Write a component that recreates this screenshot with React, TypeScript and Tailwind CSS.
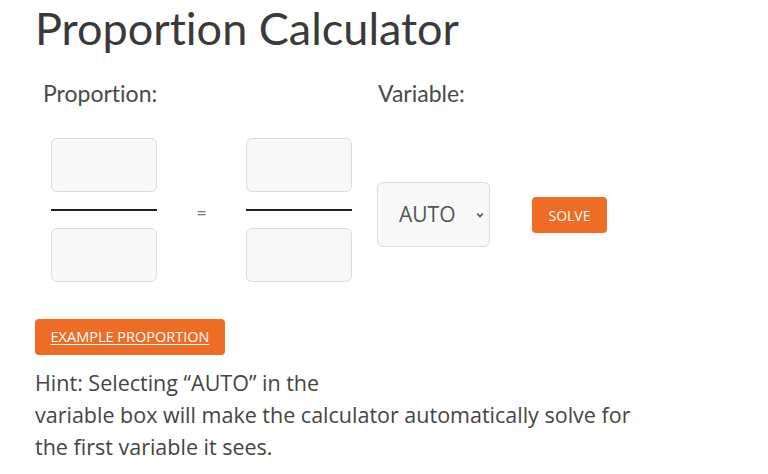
import { useState } from 'react';

function FractionBox() {
  return (
    <div className="flex w-[106px] flex-col">
      <input className="h-[54px] w-full rounded-md border border-[#dcdcdc] bg-[#f8f8f8]" />
      <div className="my-[17px] h-[2px] w-full bg-[#222]" />
      <input className="h-[54px] w-full rounded-md border border-[#dcdcdc] bg-[#f8f8f8]" />
    </div>
  );
}

export default function App() {
  const [variable, setVariable] = useState('AUTO');

  return (
    <div className="h-[474px] w-[768px] overflow-hidden bg-white font-['Open_Sans',sans-serif] text-[#444]">
      <h1 className="pl-[35px] font-['Lato',sans-serif] text-[45px] leading-[56px] text-[#3a3a3a] [font-variant-ligatures:none]">
        Proportion Calculator
      </h1>

      <div className="mt-[23px] flex font-['Lato',sans-serif] text-[23px] leading-[28px] text-[#4a4a4a] [font-variant-ligatures:none]">
        <span className="ml-[43px] w-[335px]">Proportion:</span>
        <span>Variable:</span>
      </div>

      <div className="ml-[51px] mt-[31px] flex items-start">
        <FractionBox />
        <div className="mt-[62px] flex w-[89px] justify-center text-[17px] text-[#777]">=</div>
        <FractionBox />
        <div className="relative ml-[25px] mt-[44px]">
          <select
            value={variable}
            onChange={(e) => setVariable(e.target.value)}
            className="h-[65px] w-[113px] appearance-none rounded-md border border-[#dcdcdc] bg-[#f8f8f8] pl-[21px] text-[21px] text-[#555] outline-none"
          >
            <option value="AUTO">AUTO</option>
            <option value="A">A</option>
            <option value="B">B</option>
            <option value="C">C</option>
            <option value="D">D</option>
          </select>
          <svg
            className="pointer-events-none absolute right-[5px] top-[29px]"
            width="10"
            height="8"
            viewBox="0 0 10 8"
            fill="none"
            stroke="#555"
            strokeWidth="1.6"
          >
            <path d="M2 2.5 L5 5.5 L8 2.5" />
          </svg>
        </div>
        <button className="ml-[42px] mt-[59px] h-[36px] w-[75px] rounded-[4px] bg-[#ee6c25] text-[14px] text-white">
          SOLVE
        </button>
      </div>

      <button className="ml-[35px] mt-[37px] h-[36px] w-[190px] rounded-[4px] bg-[#ee6c25] text-[14.5px] text-white underline underline-offset-2">
        EXAMPLE PROPORTION
      </button>

      <p className="ml-[35px] mt-[12px] text-[21.5px] leading-[32px] text-[#444]">
        Hint: Selecting “AUTO” in the
        <br />
        variable box will make the calculator automatically solve for
        <br />
        the first variable it sees.
      </p>
    </div>
  );
}
